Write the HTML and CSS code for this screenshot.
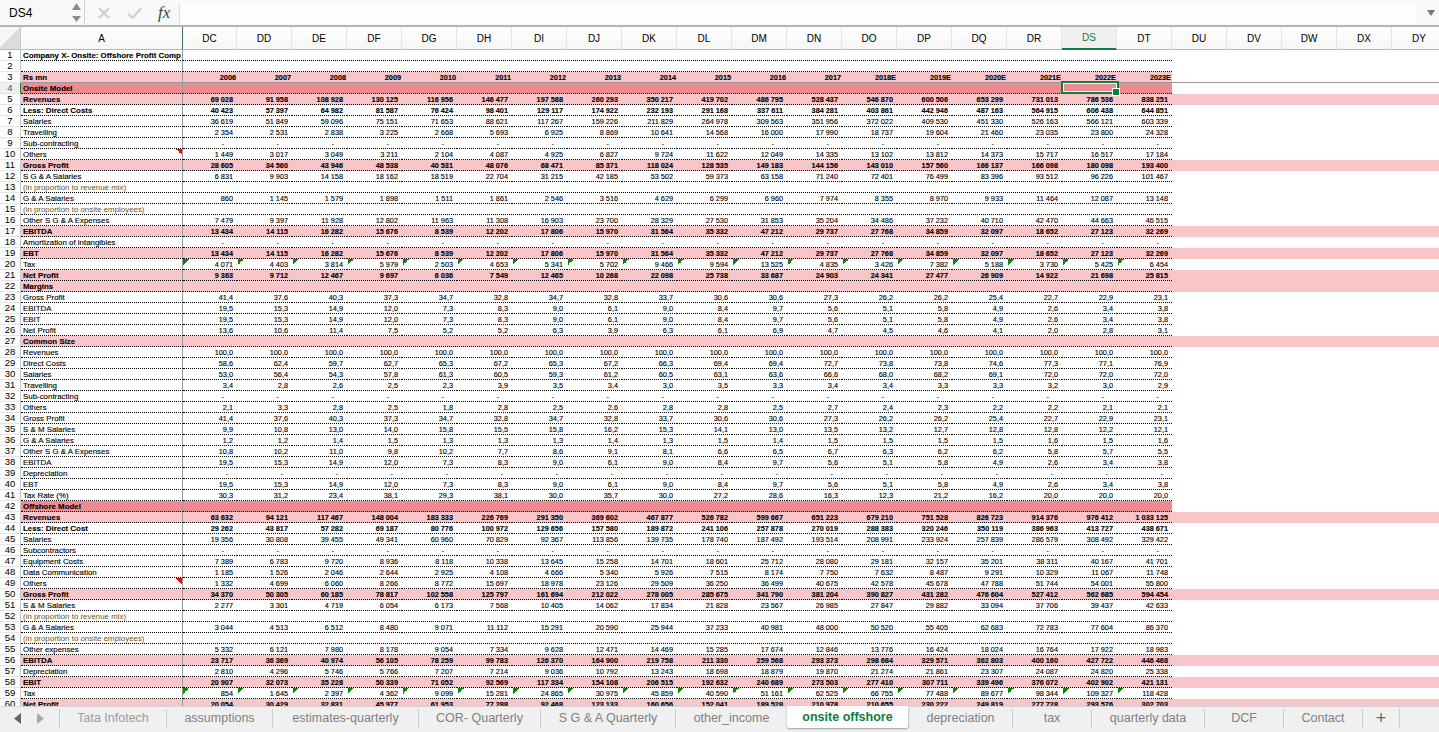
FILE: index.html
```html
<!DOCTYPE html>
<html>
<head>
<meta charset="utf-8">
<title>onsite offshore</title>
<link rel="stylesheet" href="styles.css">
</head>
<body>
<div class="formula-bar">
  <div class="name-box">DS4</div>
  <div class="spinner">
    <svg width="9" height="20" viewBox="0 0 9 20"><path d="M4.5 0 9 7H0z" fill="#8c8c8c"/><path d="M0 13h9l-4.500 6z" fill="#8c8c8c"/></svg>
  </div>
  <div class="formula-tools">
    <svg width="14" height="14" viewBox="0 0 14 14"><path d="M2 2l10 10M12 2 2 12" stroke="#cfcfcf" stroke-width="2.200" fill="none"/></svg>
    <svg width="15" height="14" viewBox="0 0 15 14"><path d="M1 7.500l4.500 4.500L14 2.500" stroke="#cfcfcf" stroke-width="2.200" fill="none"/></svg>
    <span class="fx">fx</span>
  </div>
  <div class="formula-input"></div>
  <svg class="formula-caret" width="8" height="6" viewBox="0 0 8 6"><path d="M0 0h8L4 6z" fill="#777"/></svg>
</div>
<div class="sheet">
<table>
<colgroup><col class="c-num"><col class="c-a"><col class="c-first"><col span="22" class="c-n"></colgroup>
<thead>
<tr><th class="corner"></th><th class="col-a">A</th><th>DC</th><th>DD</th><th>DE</th><th>DF</th><th>DG</th><th>DH</th><th>DI</th><th>DJ</th><th>DK</th><th>DL</th><th>DM</th><th>DN</th><th>DO</th><th>DP</th><th>DQ</th><th>DR</th><th class="col-on">DS</th><th>DT</th><th>DU</th><th>DV</th><th>DW</th><th>DX</th><th>DY</th></tr>
</thead>
<tbody>
<tr class="b"><th>1<td>Company X- Onsite: Offshore Profit Comp<td colspan="18"><td class="r" colspan="5">
<tr><th>2<td><td colspan="18"><td class="r" colspan="5">
<tr class="b yr"><th>3<td>Rs mn<td>2006<td>2007<td>2008<td>2009<td>2010<td>2011<td>2012<td>2013<td>2014<td>2015<td>2016<td>2017<td>2018E<td>2019E<td>2020E<td>2021E<td>2022E<td>2023E<td class="r" colspan="5">
<tr class="b d"><th class="row-on">4<td>Onsite Model<td colspan="16"><td class="sel"><td><td class="r" colspan="5">
<tr class="b p"><th>5<td>Revenues<td>69 028<td>91 958<td>108 928<td>130 125<td>116 956<td>146 477<td>197 588<td>260 293<td>350 217<td>419 702<td>486 795<td>528 437<td>546 870<td>600 506<td>653 299<td>731 013<td>786 536<td>838 251<td class="r" colspan="5">
<tr class="b"><th>6<td>Less: Direct Costs<td>40 423<td>57 397<td>64 982<td>81 587<td>76 424<td>98 401<td>129 117<td>174 922<td>232 193<td>291 168<td>337 611<td>384 281<td>403 861<td>442 946<td>487 163<td>564 915<td>606 438<td>644 851<td class="r" colspan="5">
<tr><th>7<td>Salaries<td>36 619<td>51 849<td>59 096<td>75 151<td>71 653<td>88 621<td>117 267<td>159 226<td>211 829<td>264 978<td>309 563<td>351 956<td>372 022<td>409 530<td>451 330<td>526 163<td>566 121<td>603 339<td class="r" colspan="5">
<tr><th>8<td>Travelling<td>2 354<td>2 531<td>2 838<td>3 225<td>2 668<td>5 693<td>6 925<td>8 869<td>10 641<td>14 568<td>16 000<td>17 990<td>18 737<td>19 604<td>21 460<td>23 035<td>23 800<td>24 328<td class="r" colspan="5">
<tr class="dash"><th>9<td>Sub-contracting
<td>-<td>-<td>-<td>-<td>-<td>-
<td>-<td>-<td>-<td>-<td>-<td>-
<td>-<td>-<td>-<td>-<td>-<td>-
<td class="r" colspan="5">
<tr class="note"><th>10<td>Others<td>1 449<td>3 017<td>3 049<td>3 211<td>2 104<td>4 087<td>4 925<td>6 827<td>9 724<td>11 622<td>12 049<td>14 335<td>13 102<td>13 812<td>14 373<td>15 717<td>16 517<td>17 184<td class="r" colspan="5">
<tr class="b p"><th>11<td>Gross Profit<td>28 605<td>34 560<td>43 946<td>48 538<td>40 531<td>48 076<td>68 471<td>85 371<td>118 024<td>128 535<td>149 183<td>144 156<td>143 010<td>157 560<td>166 137<td>166 098<td>180 098<td>193 400<td class="r" colspan="5">
<tr><th>12<td>S G &amp; A Salaries<td>6 831<td>9 903<td>14 158<td>18 162<td>18 519<td>22 704<td>31 215<td>42 185<td>53 502<td>59 373<td>63 158<td>71 240<td>72 401<td>76 499<td>83 396<td>93 512<td>96 226<td>101 467<td class="r" colspan="5">
<tr class="hint"><th>13<td>(in proportion to revenue mix)<td colspan="18"><td class="r" colspan="5">
<tr><th>14<td>G &amp; A Salaries<td>860<td>1 145<td>1 579<td>1 898<td>1 511<td>1 861<td>2 546<td>3 516<td>4 629<td>6 299<td>6 960<td>7 974<td>8 355<td>8 970<td>9 933<td>11 464<td>12 087<td>13 148<td class="r" colspan="5">
<tr class="hint"><th>15<td>(in proportion to onsite employees)<td colspan="18"><td class="r" colspan="5">
<tr><th>16<td>Other S G &amp; A Expenses<td>7 479<td>9 397<td>11 928<td>12 802<td>11 963<td>11 308<td>16 903<td>23 700<td>28 329<td>27 530<td>31 853<td>35 204<td>34 486<td>37 232<td>40 710<td>42 470<td>44 663<td>46 515<td class="r" colspan="5">
<tr class="b p"><th>17<td>EBITDA<td>13 434<td>14 115<td>16 282<td>15 676<td>8 539<td>12 202<td>17 806<td>15 970<td>31 564<td>35 332<td>47 212<td>29 737<td>27 768<td>34 859<td>32 097<td>18 652<td>27 123<td>32 269<td class="r" colspan="5">
<tr class="dash"><th>18<td>Amortization of intangibles
<td>-<td>-<td>-<td>-<td>-<td>-
<td>-<td>-<td>-<td>-<td>-<td>-
<td>-<td>-<td>-<td>-<td>-<td>-
<td class="r" colspan="5">
<tr class="b p"><th>19<td>EBT<td>13 434<td>14 115<td>16 282<td>15 676<td>8 539<td>12 202<td>17 806<td>15 970<td>31 564<td>35 332<td>47 212<td>29 737<td>27 768<td>34 859<td>32 097<td>18 652<td>27 123<td>32 269<td class="r" colspan="5">
<tr class="flag"><th>20<td>Tax<td>4 071<td>4 403<td>3 814<td>5 979<td>2 503<td>4 653<td>5 341<td>5 702<td>9 466<td>9 594<td>13 525<td>4 835<td>3 426<td>7 382<td>5 188<td>3 730<td>5 425<td>6 454<td class="r" colspan="5">
<tr class="b p"><th>21<td>Net Profit<td>9 363<td>9 712<td>12 467<td>9 697<td>6 036<td>7 549<td>12 465<td>10 268<td>22 098<td>25 738<td>33 687<td>24 903<td>24 341<td>27 477<td>26 909<td>14 922<td>21 698<td>25 815<td class="r" colspan="5">
<tr class="b p"><th>22<td>Margins<td colspan="18"><td class="r" colspan="5">
<tr><th>23<td>Gross Profit<td>41,4<td>37,6<td>40,3<td>37,3<td>34,7<td>32,8<td>34,7<td>32,8<td>33,7<td>30,6<td>30,6<td>27,3<td>26,2<td>26,2<td>25,4<td>22,7<td>22,9<td>23,1<td class="r" colspan="5">
<tr><th>24<td>EBITDA<td>19,5<td>15,3<td>14,9<td>12,0<td>7,3<td>8,3<td>9,0<td>6,1<td>9,0<td>8,4<td>9,7<td>5,6<td>5,1<td>5,8<td>4,9<td>2,6<td>3,4<td>3,8<td class="r" colspan="5">
<tr><th>25<td>EBIT<td>19,5<td>15,3<td>14,9<td>12,0<td>7,3<td>8,3<td>9,0<td>6,1<td>9,0<td>8,4<td>9,7<td>5,6<td>5,1<td>5,8<td>4,9<td>2,6<td>3,4<td>3,8<td class="r" colspan="5">
<tr><th>26<td>Net Profit<td>13,6<td>10,6<td>11,4<td>7,5<td>5,2<td>5,2<td>6,3<td>3,9<td>6,3<td>6,1<td>6,9<td>4,7<td>4,5<td>4,6<td>4,1<td>2,0<td>2,8<td>3,1<td class="r" colspan="5">
<tr class="b p"><th>27<td>Common Size<td colspan="18"><td class="r" colspan="5">
<tr><th>28<td>Revenues<td>100,0<td>100,0<td>100,0<td>100,0<td>100,0<td>100,0<td>100,0<td>100,0<td>100,0<td>100,0<td>100,0<td>100,0<td>100,0<td>100,0<td>100,0<td>100,0<td>100,0<td>100,0<td class="r" colspan="5">
<tr><th>29<td>Direct Costs<td>58,6<td>62,4<td>59,7<td>62,7<td>65,3<td>67,2<td>65,3<td>67,2<td>66,3<td>69,4<td>69,4<td>72,7<td>73,8<td>73,8<td>74,6<td>77,3<td>77,1<td>76,9<td class="r" colspan="5">
<tr><th>30<td>Salaries<td>53,0<td>56,4<td>54,3<td>57,8<td>61,3<td>60,5<td>59,3<td>61,2<td>60,5<td>63,1<td>63,6<td>66,6<td>68,0<td>68,2<td>69,1<td>72,0<td>72,0<td>72,0<td class="r" colspan="5">
<tr><th>31<td>Travelling<td>3,4<td>2,8<td>2,6<td>2,5<td>2,3<td>3,9<td>3,5<td>3,4<td>3,0<td>3,5<td>3,3<td>3,4<td>3,4<td>3,3<td>3,3<td>3,2<td>3,0<td>2,9<td class="r" colspan="5">
<tr class="dash"><th>32<td>Sub-contracting
<td>-<td>-<td>-<td>-<td>-<td>-
<td>-<td>-<td>-<td>-<td>-<td>-
<td>-<td>-<td>-<td>-<td>-<td>-
<td class="r" colspan="5">
<tr><th>33<td>Others<td>2,1<td>3,3<td>2,8<td>2,5<td>1,8<td>2,8<td>2,5<td>2,6<td>2,8<td>2,8<td>2,5<td>2,7<td>2,4<td>2,3<td>2,2<td>2,2<td>2,1<td>2,1<td class="r" colspan="5">
<tr><th>34<td>Gross Profit<td>41,4<td>37,6<td>40,3<td>37,3<td>34,7<td>32,8<td>34,7<td>32,8<td>33,7<td>30,6<td>30,6<td>27,3<td>26,2<td>26,2<td>25,4<td>22,7<td>22,9<td>23,1<td class="r" colspan="5">
<tr><th>35<td>S &amp; M Salaries<td>9,9<td>10,8<td>13,0<td>14,0<td>15,8<td>15,5<td>15,8<td>16,2<td>15,3<td>14,1<td>13,0<td>13,5<td>13,2<td>12,7<td>12,8<td>12,8<td>12,2<td>12,1<td class="r" colspan="5">
<tr><th>36<td>G &amp; A Salaries<td>1,2<td>1,2<td>1,4<td>1,5<td>1,3<td>1,3<td>1,3<td>1,4<td>1,3<td>1,5<td>1,4<td>1,5<td>1,5<td>1,5<td>1,5<td>1,6<td>1,5<td>1,6<td class="r" colspan="5">
<tr><th>37<td>Other S G &amp; A Expenses<td>10,8<td>10,2<td>11,0<td>9,8<td>10,2<td>7,7<td>8,6<td>9,1<td>8,1<td>6,6<td>6,5<td>6,7<td>6,3<td>6,2<td>6,2<td>5,8<td>5,7<td>5,5<td class="r" colspan="5">
<tr><th>38<td>EBITDA<td>19,5<td>15,3<td>14,9<td>12,0<td>7,3<td>8,3<td>9,0<td>6,1<td>9,0<td>8,4<td>9,7<td>5,6<td>5,1<td>5,8<td>4,9<td>2,6<td>3,4<td>3,8<td class="r" colspan="5">
<tr class="dash short"><th>39<td>Depreciation
<td>-<td>-<td>-<td>-<td>-<td>-
<td>-<td>-<td>-<td>-<td>-<td>-
<td>-<td>-<td>-<td>-<td>-<td>-
<td class="r" colspan="5">
<tr><th>40<td>EBT<td>19,5<td>15,3<td>14,9<td>12,0<td>7,3<td>8,3<td>9,0<td>6,1<td>9,0<td>8,4<td>9,7<td>5,6<td>5,1<td>5,8<td>4,9<td>2,6<td>3,4<td>3,8<td class="r" colspan="5">
<tr><th>41<td>Tax Rate (%)<td>30,3<td>31,2<td>23,4<td>38,1<td>29,3<td>38,1<td>30,0<td>35,7<td>30,0<td>27,2<td>28,6<td>16,3<td>12,3<td>21,2<td>16,2<td>20,0<td>20,0<td>20,0<td class="r" colspan="5">
<tr class="b d"><th>42<td>Offshore Model<td colspan="18"><td class="r" colspan="5">
<tr class="b p"><th>43<td>Revenues<td>63 632<td>94 121<td>117 467<td>148 004<td>183 333<td>226 769<td>291 350<td>369 602<td>467 877<td>526 782<td>599 667<td>651 223<td>679 210<td>751 528<td>826 723<td>914 376<td>976 412<td>1 033 125<td class="r" colspan="5">
<tr class="b"><th>44<td>Less: Direct Cost<td>29 262<td>43 817<td>57 282<td>69 187<td>80 776<td>100 972<td>129 656<td>157 580<td>189 872<td>241 106<td>257 878<td>270 019<td>288 383<td>320 246<td>350 119<td>386 963<td>413 727<td>438 671<td class="r" colspan="5">
<tr><th>45<td>Salaries<td>19 356<td>30 808<td>39 455<td>49 341<td>60 960<td>70 829<td>92 367<td>113 856<td>139 735<td>178 740<td>187 492<td>193 514<td>208 991<td>233 924<td>257 839<td>286 579<td>308 492<td>329 422<td class="r" colspan="5">
<tr class="dash"><th>46<td>Subcontractors
<td>-<td>-<td>-<td>-<td>-<td>-
<td>-<td>-<td>-<td>-<td>-<td>-
<td>-<td>-<td>-<td>-<td>-<td>-
<td class="r" colspan="5">
<tr><th>47<td>Equipment Costs<td>7 389<td>6 783<td>9 720<td>8 936<td>8 118<td>10 338<td>13 645<td>15 258<td>14 701<td>18 601<td>25 712<td>28 080<td>29 181<td>32 157<td>35 201<td>38 311<td>40 167<td>41 701<td class="r" colspan="5">
<tr><th>48<td>Data Communication<td>1 185<td>1 526<td>2 046<td>2 644<td>2 925<td>4 108<td>4 666<td>5 340<td>5 926<td>7 515<td>8 174<td>7 750<td>7 632<td>8 487<td>9 291<td>10 329<td>11 067<td>11 748<td class="r" colspan="5">
<tr class="note"><th>49<td>Others<td>1 332<td>4 699<td>6 060<td>8 266<td>8 772<td>15 697<td>18 978<td>23 126<td>29 509<td>36 250<td>36 499<td>40 675<td>42 578<td>45 678<td>47 788<td>51 744<td>54 001<td>55 800<td class="r" colspan="5">
<tr class="b p"><th>50<td>Gross Profit<td>34 370<td>50 305<td>60 185<td>78 817<td>102 558<td>125 797<td>161 694<td>212 022<td>278 005<td>285 675<td>341 790<td>381 204<td>390 827<td>431 282<td>476 604<td>527 412<td>562 685<td>594 454<td class="r" colspan="5">
<tr><th>51<td>S &amp; M Salaries<td>2 277<td>3 301<td>4 719<td>6 054<td>6 173<td>7 568<td>10 405<td>14 062<td>17 834<td>21 828<td>23 567<td>26 985<td>27 847<td>29 882<td>33 094<td>37 706<td>39 437<td>42 633<td class="r" colspan="5">
<tr class="hint"><th>52<td>(in proportion to revenue mix)<td colspan="18"><td class="r" colspan="5">
<tr><th>53<td>G &amp; A Salaries<td>3 044<td>4 513<td>6 512<td>8 480<td>9 071<td>11 112<td>15 291<td>20 590<td>25 944<td>37 233<td>40 981<td>48 000<td>50 520<td>55 405<td>62 683<td>72 783<td>77 604<td>86 370<td class="r" colspan="5">
<tr class="hint"><th>54<td>(in proportion to onsite employees)<td colspan="18"><td class="r" colspan="5">
<tr><th>55<td>Other expenses<td>5 332<td>6 121<td>7 980<td>8 178<td>9 054<td>7 334<td>9 628<td>12 471<td>14 469<td>15 285<td>17 674<td>12 846<td>13 776<td>16 424<td>18 024<td>16 764<td>17 922<td>18 983<td class="r" colspan="5">
<tr class="b p"><th>56<td>EBITDA<td>23 717<td>36 369<td>40 974<td>56 105<td>78 259<td>99 783<td>126 370<td>164 900<td>219 758<td>211 330<td>259 568<td>293 373<td>298 684<td>329 571<td>362 803<td>400 160<td>427 722<td>446 468<td class="r" colspan="5">
<tr><th>57<td>Depreciation<td>2 810<td>4 296<td>5 746<td>5 766<td>7 207<td>7 214<td>9 036<td>10 792<td>13 243<td>18 698<td>18 879<td>19 870<td>21 274<td>21 861<td>23 307<td>24 087<td>24 820<td>25 338<td class="r" colspan="5">
<tr class="b p"><th>58<td>EBIT<td>20 907<td>32 073<td>35 228<td>50 339<td>71 052<td>92 569<td>117 334<td>154 108<td>206 515<td>192 632<td>240 689<td>273 503<td>277 410<td>307 711<td>339 496<td>376 072<td>402 902<td>421 131<td class="r" colspan="5">
<tr class="flag"><th>59<td>Tax<td>854<td>1 645<td>2 397<td>4 362<td>9 099<td>15 281<td>24 865<td>30 975<td>45 859<td>40 590<td>51 161<td>62 525<td>66 755<td>77 488<td>89 677<td>98 344<td>109 327<td>118 428<td class="r" colspan="5">
<tr class="b p"><th>60<td>Net Profit<td>20 054<td>30 429<td>32 831<td>45 977<td>61 953<td>77 288<td>92 468<td>123 133<td>160 656<td>152 041<td>189 528<td>210 978<td>210 655<td>230 222<td>249 819<td>277 728<td>293 576<td>302 703<td class="r" colspan="5">
</tbody>
</table>
</div>
<div class="tabs">
  <div class="tab-nav">
    <svg width="7" height="11" viewBox="0 0 7 11"><path d="M7 0v11L0 5.500z" fill="#666"/></svg>
    <svg width="7" height="11" viewBox="0 0 7 11"><path d="M0 0v11l7-5.500z" fill="#a8a8a8"/></svg>
  </div>
  <div class="tab tab-first">Tata Infotech</div>
  <div class="tab">assumptions</div>
  <div class="tab">estimates-quarterly</div>
  <div class="tab">COR- Quarterly</div>
  <div class="tab">S G &amp; A Quarterly</div>
  <div class="tab">other_income</div>
  <div class="tab tab-on">onsite offshore</div>
  <div class="tab">depreciation</div>
  <div class="tab">tax</div>
  <div class="tab">quarterly data</div>
  <div class="tab">DCF</div>
  <div class="tab">Contact</div>
  <div class="tab tab-add">+</div>
</div>
</body>
</html>
```

FILE: styles.css
```css
* {
  box-sizing: border-box;
}

body {
  margin: 0;
  height: 100vh;
  display: flex;
  flex-direction: column;
  overflow: hidden;
  background: white;
  font-family: "Liberation Sans", Arial, sans-serif;
  color: black;
}

/* formula bar */
.formula-bar {
  height: 27px;
  flex: none;
  display: flex;
  align-items: center;
  background: #f8f8f8;
  border-bottom: 2px solid #b4b4b4;
}
.name-box {
  width: 72px;
  padding-left: 9px;
  font-size: 12px;
}
.spinner {
  width: 13px;
  height: 25px;
  display: flex;
  align-items: center;
  border-right: 1px solid #d0d0d0;
}
.formula-tools {
  width: 95px;
  height: 20px;
  padding-left: 12px;
  display: flex;
  align-items: center;
  gap: 16px;
  border-right: 1px solid #dcdcdc;
}
.fx {
  font-family: "Liberation Serif", serif;
  font-style: italic;
  font-size: 17px;
  color: #444;
}
.formula-input {
  width: 1237px;
  height: 22px;
  background: #fdfdfd;
}
.formula-caret {
  margin-left: 10px;
}

/* grid */
.sheet {
  flex: 1;
  min-height: 0;
  overflow: hidden;
}
table {
  width: 1447px;
  table-layout: fixed;
  border-collapse: separate;
  border-spacing: 0;
  font-size: 7.3px;
}
.c-num { width: 21px; }
.c-a { width: 162px; }
.c-first { width: 54px; }
.c-n { width: 55px; }

thead th {
  height: 23px;
  padding: 0;
  font-size: 10px;
  font-weight: normal;
  background: linear-gradient(#ffffff, #f6f6f6);
  border-right: 1px solid #e4e4e4;
  border-bottom: 1px solid #b8b8b8;
}
thead .corner {
  background: linear-gradient(135deg, #f6f6f6 50%, #dcdcdc 50%);
  border-right: 1px solid #c8c8c8;
}
thead .col-a {
  border-right: 1px solid #3d7a5a;
}
thead .col-on {
  color: #107c41;
  background: #f0f0f0;
  border-bottom: 2px solid #107c41;
}

tbody th {
  height: 11px;
  padding: 0;
  font-size: 9.5px;
  line-height: 10px;
  font-weight: normal;
  background: white;
  border-right: 1px solid #c8c8c8;
  border-bottom: 1px solid #e6e6e6;
}
tbody th.row-on {
  color: #107c41;
  background: #efefef;
  border-right: 1px solid #107c41;
}
tbody td {
  height: 11px;
  padding: 1px 4px 0 0;
  line-height: 9px;
  text-align: right;
  white-space: nowrap;
  overflow: hidden;
  color: black;
  border-bottom: 1px dotted black;
  -webkit-text-stroke: 0.12px black;
}
tbody th + td {
  padding: 1px 0 0 2px;
  font-size: 7.9px;
  text-align: left;
  border-right: 1px solid #999999;
}
tbody td.r {
  padding: 0;
  border-bottom: 0;
}

.b td {
  font-weight: bold;
  color: black;
}
.p td {
  background: #f8c5c9;
}
.d td {
  background: #ee8a92;
}
.d td.r {
  background: white;
}
.yr td {
  padding-right: 1px;
  background: #f8c5c9;
  border-bottom: 1px solid #999999;
}
.yr td.r {
  background: white;
  border-bottom: 1px solid #999999;
}
.hint th + td {
  color: #6b5520;
  -webkit-text-stroke: 0;
}
.dash td {
  padding-right: 13px;
}
.short td {
  padding-right: 9px;
}

/* little corner marks */
.flag td {
  background: linear-gradient(135deg, #0a8a0a 50%, transparent 50%) 1px 0 / 6px 6px no-repeat;
}
.flag th + td,
.flag td.r {
  background: none;
}
.flag th + td + td {
  background-position: 0 0;
}
.note th + td {
  background: linear-gradient(225deg, #ff0000 50%, transparent 50%) right top / 6px 6px no-repeat;
}

/* selected cell DS4 */
.sel {
  position: relative;
  overflow: visible !important;
}
.sel::before {
  content: "";
  position: absolute;
  top: -2px;
  left: -1px;
  right: -2px;
  bottom: -1px;
  border: 2px solid #107c41;
  box-shadow: inset 0 0 0 1px white;
}
.sel::after {
  content: "";
  position: absolute;
  right: -3px;
  bottom: -3px;
  width: 6px;
  height: 6px;
  background: #107c41;
  border: 1px solid white;
}

/* sheet tabs */
.tabs {
  height: 26px;
  flex: none;
  display: grid;
  grid-template-columns: 59px 107px 106px 146px 122px 135px 112px 121px 104px 79px 113px 79px 79px 38px;
  background: #f0f0f0;
  border-top: 1px solid #d4d4d4;
  font-size: 12.5px;
  color: #808080;
}
.tab-nav {
  height: 22px;
  padding-left: 14px;
  display: flex;
  align-items: center;
  gap: 16px;
}
.tab {
  height: 19px;
  margin-top: 2px;
  line-height: 19px;
  text-align: center;
  border-left: 1px solid #cccccc;
}
.tab-first {
  color: #9c9c9c;
}
.tab-on {
  height: 22px;
  margin-top: -1px;
  line-height: 23px;
  font-weight: bold;
  color: #107c41;
  background: white;
  border-left: 0;
  border-radius: 0 0 2px 2px;
  box-shadow: 0 1px 2px rgba(0, 0, 0, 0.35);
}
.tab-add {
  font-size: 18px;
  color: #666;
  border-right: 1px solid #cccccc;
}
```
